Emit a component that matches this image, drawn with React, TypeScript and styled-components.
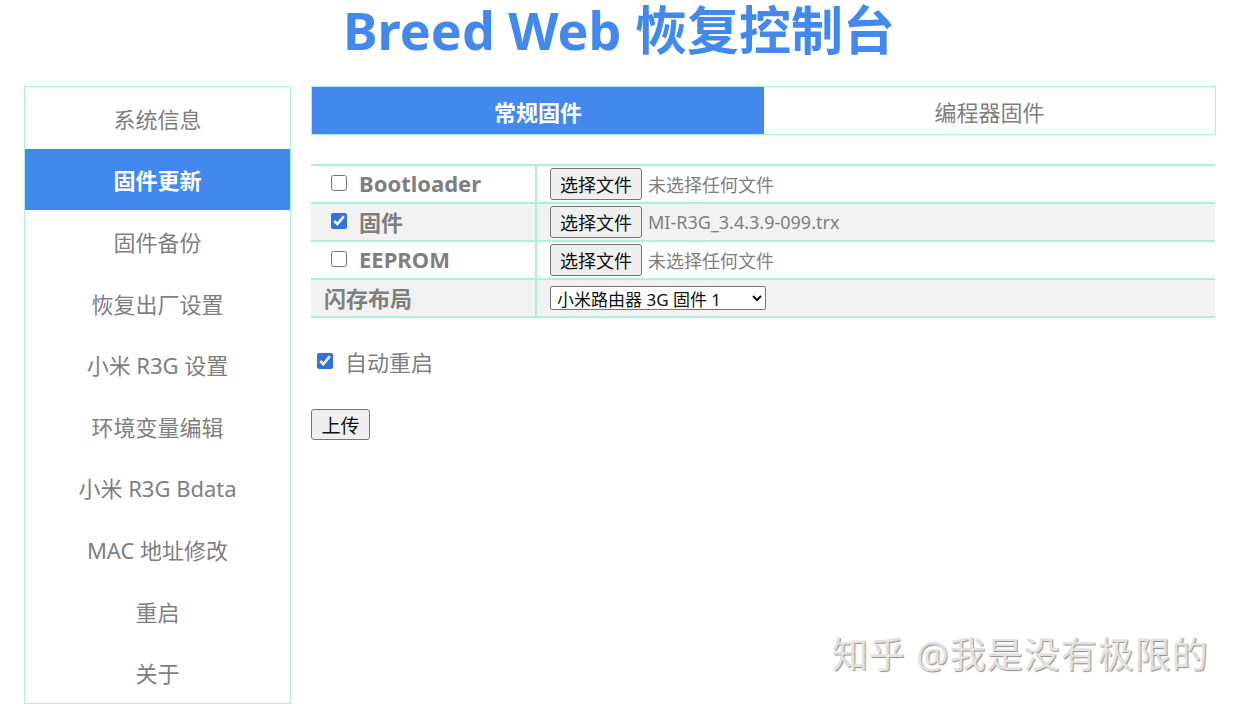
import React from 'react'
import styled, { createGlobalStyle } from 'styled-components'

const BLUE = '#4388ec'
const LINE = '#a6f2dc'
const GRAY = '#7f7f7f'
const CJK = '"Noto Sans", "Noto Sans CJK SC", sans-serif'

const GlobalStyle = createGlobalStyle`
  html, body {
    margin: 0;
    padding: 0;
    background: #ffffff;
    font-family: ${CJK};
  }
`

const Page = styled.div`
  position: relative;
  width: 1238px;
  height: 704px;
  overflow: hidden;
`

const Title = styled.h1`
  margin: 0;
  height: 80px;
  text-align: center;
  font-size: 52px;
  line-height: 60px;
  font-weight: 700;
  color: ${BLUE};
`

const Body = styled.div`
  display: flex;
  gap: 20px;
  padding: 6px 0 0 24px;
`

const Sidebar = styled.nav`
  width: 265px;
  border: 1px solid ${LINE};
  display: flex;
  flex-direction: column;
  flex-shrink: 0;
`

const NavItem = styled.div<{ active?: boolean }>`
  height: 61.6px;
  display: flex;
  align-items: center;
  justify-content: center;
  font-size: 22px;
  font-weight: ${({ active }) => (active ? 700 : 400)};
  color: ${({ active }) => (active ? '#ffffff' : GRAY)};
  background: ${({ active }) => (active ? BLUE : 'transparent')};
`

const Main = styled.div`
  width: 905px;
  display: flex;
  flex-direction: column;
`

const Tabs = styled.div`
  display: flex;
  height: 47px;
  border: 1px solid ${LINE};
`

const Tab = styled.div<{ active?: boolean }>`
  flex: ${({ active }) => (active ? '0 0 452px' : '1')};
  display: flex;
  align-items: center;
  justify-content: center;
  font-size: 22px;
  font-weight: ${({ active }) => (active ? 700 : 400)};
  color: ${({ active }) => (active ? '#ffffff' : GRAY)};
  background: ${({ active }) => (active ? BLUE : '#ffffff')};
`

const Table = styled.div`
  margin-top: 29px;
  border-top: 2px solid ${LINE};
  width: 904px;
`

const Row = styled.div<{ shaded?: boolean }>`
  display: grid;
  grid-template-columns: 226px 1fr;
  height: 36px;
  border-bottom: 2px solid ${LINE};
  background: ${({ shaded }) => (shaded ? '#f2f2f2' : '#ffffff')};
`

const LabelCell = styled.div`
  display: flex;
  align-items: center;
  gap: 12px;
  padding-left: 13px;
  padding-bottom: 2px;
  border-right: 2px solid ${LINE};
  font-size: 22px;
  font-weight: 700;
  color: ${GRAY};
`

const ValueCell = styled.div`
  display: flex;
  align-items: center;
  padding-left: 13px;
  gap: 6px;
`

const Check = styled.input.attrs({ type: 'checkbox' })<{ indent?: number }>`
  width: 16px;
  height: 16px;
  margin: 0 0 0 ${({ indent }) => indent ?? 7}px;
  accent-color: #2f73e0;
`

const FileButton = styled.button`
  height: 32px;
  padding: 0 9px;
  font-family: ${CJK};
  font-size: 18px;
  color: #111;
  background: #efefef;
  border: 1px solid #767676;
  border-radius: 3px;
`

const FileName = styled.span`
  font-size: 18px;
  color: ${GRAY};
`

const Select = styled.select`
  height: 24px;
  width: 216px;
  font-family: ${CJK};
  font-size: 17px;
  color: #111;
  border: 1px solid #767676;
  border-radius: 2px;
  background: #fff;
  padding: 0 2px;
`

const AutoRow = styled.label`
  display: flex;
  align-items: center;
  gap: 12px;
  margin-top: 27px;
  padding-left: 6px;
  font-size: 22px;
  color: ${GRAY};
`

const UploadButton = styled.button`
  align-self: flex-start;
  margin-top: 32px;
  width: 59px;
  height: 31px;
  font-family: ${CJK};
  font-size: 19px;
  color: #111;
  background: #efefef;
  border: 1px solid #767676;
  border-radius: 3px;
  padding: 0;
`

const Watermark = styled.div`
  position: absolute;
  left: 832px;
  top: 626px;
  font-size: 36px;
  letter-spacing: 1px;
  color: #e2e2e2;
  text-shadow: 1px 1px 1px #8f8f8f;
`

const navItems = [
  '系统信息',
  '固件更新',
  '固件备份',
  '恢复出厂设置',
  '小米 R3G 设置',
  '环境变量编辑',
  '小米 R3G Bdata',
  'MAC 地址修改',
  '重启',
  '关于',
]

const files = [
  { label: 'Bootloader', checked: false, file: '未选择任何文件' },
  { label: '固件', checked: true, file: 'MI-R3G_3.4.3.9-099.trx' },
  { label: 'EEPROM', checked: false, file: '未选择任何文件' },
]

export default function App() {
  return (
    <Page>
      <GlobalStyle />
      <Title>Breed Web 恢复控制台</Title>
      <Body>
        <Sidebar>
          {navItems.map((item) => (
            <NavItem key={item} active={item === '固件更新'}>
              {item}
            </NavItem>
          ))}
        </Sidebar>
        <Main>
          <Tabs>
            <Tab active>常规固件</Tab>
            <Tab>编程器固件</Tab>
          </Tabs>
          <Table>
            {files.map((f, i) => (
              <Row key={f.label} shaded={i % 2 === 1}>
                <LabelCell>
                  <Check defaultChecked={f.checked} />
                  {f.label}
                </LabelCell>
                <ValueCell>
                  <FileButton>选择文件</FileButton>
                  <FileName>{f.file}</FileName>
                </ValueCell>
              </Row>
            ))}
            <Row shaded>
              <LabelCell>闪存布局</LabelCell>
              <ValueCell>
                <Select defaultValue="1">
                  <option value="1">小米路由器 3G 固件 1</option>
                  <option value="2">小米路由器 3G 固件 2</option>
                </Select>
              </ValueCell>
            </Row>
          </Table>
          <AutoRow>
            <Check defaultChecked indent={0} />
            自动重启
          </AutoRow>
          <UploadButton>上传</UploadButton>
        </Main>
      </Body>
      <Watermark>知乎 @我是没有极限的</Watermark>
    </Page>
  )
}
